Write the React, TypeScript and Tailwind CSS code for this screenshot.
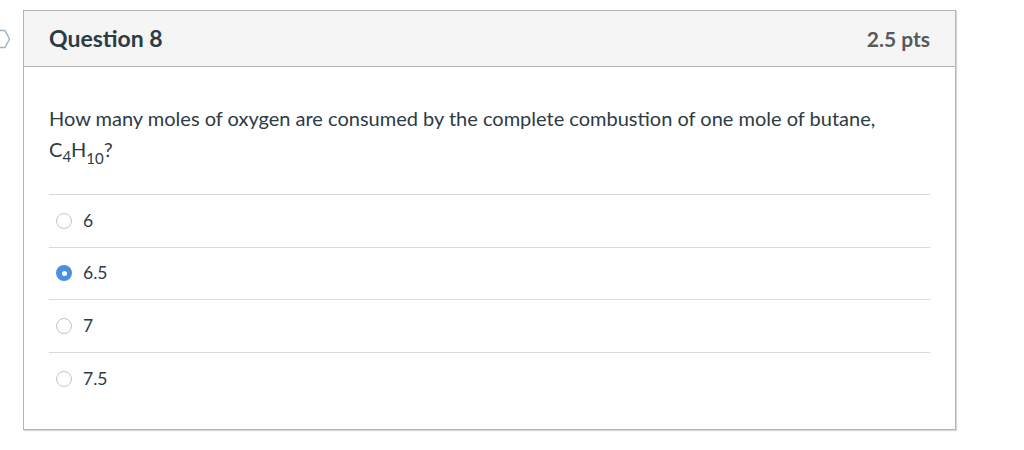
import { useState } from 'react'

const answers = ['6', '6.5', '7', '7.5']

export default function App() {
  const [picked, setPicked] = useState('6.5')

  return (
    <div className="h-[450px] w-[1024px] bg-white pt-[10px] font-['Lato','Liberation_Sans',sans-serif] text-[#2d3b45]">
      <div className="flex">
        <div className="w-[23px] shrink-0 pt-[19px]">
          <svg width="12" height="20" viewBox="0 0 12 20" className="-ml-[1px]">
            <path d="M0 1.5 H6 L10.5 10 L6 18.5 H0" fill="none" stroke="#9fb3c8" strokeWidth="1.5" strokeLinejoin="round" />
          </svg>
        </div>

        <div className="flex h-[420px] w-[933px] flex-col border border-[#b4b4b4] shadow-[1px_1px_1px_rgba(0,0,0,0.15)]">
          <div className="flex h-[56px] shrink-0 items-center justify-between border-b border-[#b4b4b4] bg-[#f5f5f5] pl-[25px] pr-[25px]">
            <span className="text-[23px] font-bold text-[#2d3b45]">Question 8</span>
            <span className="text-[21px] font-bold text-[#555a5e]">2.5 pts</span>
          </div>

          <div className="px-[25px] pt-[36px]">
            <p className="text-[20px] leading-[31px]">
              How many moles of oxygen are consumed by the complete combustion of one mole of butane,
              <br />
              C<sub className="align-[-0.1em] text-[0.75em]">4</sub>H<sub className="align-[-0.2em] text-[0.75em]">10</sub>?
            </p>

            <div className="mt-[29px] border-t border-[#dadada]">
              {answers.map((a, i) => (
                <label
                  key={a}
                  onClick={() => setPicked(a)}
                  className={`flex h-[52.5px] cursor-pointer items-center gap-[11px] pl-[7px] text-[17.5px] ${
                    i < answers.length - 1 ? 'border-b border-[#dadada]' : ''
                  }`}
                >
                  {picked === a ? (
                    <span className="flex h-[16px] w-[16px] items-center justify-center rounded-full bg-[#4a90e2]">
                      <span className="h-[5px] w-[5px] rounded-full bg-white" />
                    </span>
                  ) : (
                    <span className="h-[16px] w-[16px] rounded-full border border-[#c3c3c3] bg-white" />
                  )}
                  <span>{a}</span>
                </label>
              ))}
            </div>
          </div>
        </div>
      </div>
    </div>
  )
}
